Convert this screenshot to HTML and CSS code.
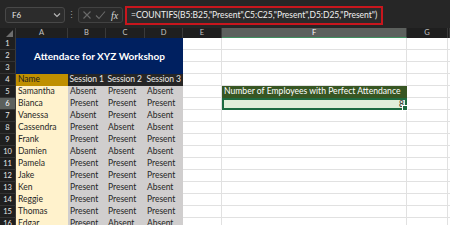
FILE: index.html
```html
<!DOCTYPE html>
<html>
<head>
<meta charset="utf-8">
<link rel="stylesheet" href="styles.css">
</head>
<body>
<div class="app">
  <div class="toolbar">
    <div class="namebox">
      <span class="ref">F6</span>
      <svg class="chev" width="8" height="6" viewBox="0 0 8 6"><path d="M1 1.5 L4 4.5 L7 1.5" fill="none" stroke="#b8b8b8" stroke-width="1.1"/></svg>
    </div>
    <div class="dots">⋮</div>
    <div class="btns">
      <svg width="10" height="10" viewBox="0 0 10 10"><path d="M1.5 1.5 L8.5 8.5 M8.5 1.5 L1.5 8.5" stroke="#6a6a6a" stroke-width="1.1" fill="none"/></svg>
      <svg width="11" height="10" viewBox="0 0 11 10"><path d="M1 5.5 L4 8.5 L10 1.5" stroke="#6a6a6a" stroke-width="1.1" fill="none"/></svg>
      <span class="fx">fx</span>
    </div>
    <div class="formula">=COUNTIFS(B5:B25,"Present",C5:C25,"Present",D5:D25,"Present")</div>
    <div class="rest"></div>
  </div>
  <div class="sheet">
    <div class="corner"><svg width="7" height="7" viewBox="0 0 7 7"><path d="M7 0 L7 7 L0 7 Z" fill="#6e6e6e"/></svg></div>
    <div class="ch">A</div><div class="ch">B</div><div class="ch">C</div><div class="ch">D</div><div class="ch">E</div><div class="ch sel">F</div><div class="ch">G</div><div class="ch"></div>

    <div class="rh">1</div><div class="title">Attendace for XYZ Workshop</div><div class="c"></div><div class="c"></div><div class="c"></div><div class="c"></div>
    <div class="rh">2</div><div class="c"></div><div class="c"></div><div class="c"></div><div class="c"></div>
    <div class="rh">3</div><div class="c"></div><div class="c"></div><div class="c"></div><div class="c"></div>

    <div class="rh">4</div><div class="c nmh">Name</div><div class="c sesh">Session 1</div><div class="c sesh">Session 2</div><div class="c sesh">Session 3</div><div class="c"></div><div class="c"></div><div class="c"></div><div class="c"></div>

    <div class="rh">5</div><div class="c nm">Samantha</div><div class="c v">Absent</div><div class="c v">Present</div><div class="c v">Absent</div><div class="c"></div><div class="c gh">Number of Employees with Perfect Attendance</div><div class="c"></div><div class="c"></div>
    <div class="rh sel">6</div><div class="c nm">Bianca</div><div class="c v">Present</div><div class="c v">Present</div><div class="c v">Present</div><div class="c"></div><div class="c result">8</div><div class="c"></div><div class="c"></div>
    <div class="rh">7</div><div class="c nm">Vanessa</div><div class="c v">Absent</div><div class="c v">Present</div><div class="c v">Absent</div><div class="c"></div><div class="c"></div><div class="c"></div><div class="c"></div>
    <div class="rh">8</div><div class="c nm">Cassendra</div><div class="c v">Present</div><div class="c v">Absent</div><div class="c v">Absent</div><div class="c"></div><div class="c"></div><div class="c"></div><div class="c"></div>
    <div class="rh">9</div><div class="c nm">Frank</div><div class="c v">Present</div><div class="c v">Present</div><div class="c v">Present</div><div class="c"></div><div class="c"></div><div class="c"></div><div class="c"></div>
    <div class="rh">10</div><div class="c nm">Damien</div><div class="c v">Absent</div><div class="c v">Absent</div><div class="c v">Absent</div><div class="c"></div><div class="c"></div><div class="c"></div><div class="c"></div>
    <div class="rh">11</div><div class="c nm">Pamela</div><div class="c v">Present</div><div class="c v">Present</div><div class="c v">Present</div><div class="c"></div><div class="c"></div><div class="c"></div><div class="c"></div>
    <div class="rh">12</div><div class="c nm">Jake</div><div class="c v">Present</div><div class="c v">Present</div><div class="c v">Present</div><div class="c"></div><div class="c"></div><div class="c"></div><div class="c"></div>
    <div class="rh">13</div><div class="c nm">Ken</div><div class="c v">Present</div><div class="c v">Present</div><div class="c v">Absent</div><div class="c"></div><div class="c"></div><div class="c"></div><div class="c"></div>
    <div class="rh">14</div><div class="c nm">Reggie</div><div class="c v">Present</div><div class="c v">Present</div><div class="c v">Present</div><div class="c"></div><div class="c"></div><div class="c"></div><div class="c"></div>
    <div class="rh">15</div><div class="c nm">Thomas</div><div class="c v">Present</div><div class="c v">Present</div><div class="c v">Present</div><div class="c"></div><div class="c"></div><div class="c"></div><div class="c"></div>
    <div class="rh">16</div><div class="c nm">Edgar</div><div class="c v">Present</div><div class="c v">Absent</div><div class="c v">Absent</div><div class="c"></div><div class="c"></div><div class="c"></div><div class="c"></div>
  </div>
</div>
</body>
</html>
```

FILE: styles.css
```css
* { box-sizing: border-box; }
html, body { margin: 0; padding: 0; }
body {
  width: 450px;
  height: 225px;
  overflow: hidden;
  background: #ffffff;
  font-family: "Lato", "Liberation Sans", sans-serif;
}
.app { display: flex; flex-direction: column; width: 450px; height: 225px; overflow: hidden; }

.toolbar {
  height: 28px;
  flex: none;
  background: #262626;
  display: flex;
  align-items: flex-start;
  padding: 7px 0 0 5px;
}
.namebox {
  width: 60px;
  height: 16px;
  border: 1px solid #484848;
  border-radius: 3px;
  background: #2c2c2c;
  display: flex;
  align-items: center;
  justify-content: space-between;
  padding: 0 3px 0 6px;
  color: #e6e6e6;
  font-size: 8px;
}
.chev { display: block; }
.dots {
  width: 13px;
  height: 16px;
  color: #9a9a9a;
  font-size: 9px;
  line-height: 16px;
  text-align: center;
}
.btns {
  width: 45px;
  height: 16px;
  border: 1px solid #424242;
  border-radius: 3px;
  background: #2a2a2a;
  display: flex;
  align-items: center;
  gap: 3px;
  padding: 0 0 0 3px;
}
.btns svg { display: block; }
.fx {
  font-family: "Liberation Serif", serif;
  font-style: italic;
  color: #d8d8d8;
  font-size: 10px;
  margin-left: 2px;
}
.formula {
  margin-left: 2px;
  margin-top: -1px;
  width: 258px;
  height: 19px;
  border: 2px solid #c8161d;
  background: #2b2b2b;
  color: #f0f0f0;
  font-size: 8.5px;
  line-height: 15px;
  padding: 0 0 0 4px;
  white-space: nowrap;
  overflow: hidden;
}
.rest { flex: 1; }

.sheet {
  display: grid;
  grid-template-columns: 16px 52px 38px 39px 38px 39px 185px 41px 2px;
  grid-template-rows: 10px;
  grid-auto-rows: 12px;
  font-size: 8.5px;
}
.corner {
  background: #1f1f1f;
  border-right: 1px solid #3a3a3a;
  display: flex;
  align-items: flex-end;
  justify-content: flex-end;
  padding: 0 2px 1px 0;
}
.corner svg { display: block; }
.ch {
  background: #1f1f1f;
  color: #c4c4c4;
  border-right: 1px solid #3a3a3a;
  font-size: 7.5px;
  line-height: 10px;
  text-align: center;
}
.ch.sel { background: #5c605d; color: #ffffff; border-bottom: 1px solid #3f8f5f; line-height: 9px; }
.rh {
  background: #1f1f1f;
  color: #e8e8e8;
  border-bottom: 1px solid #333333;
  border-right: 1px solid #3a3a3a;
  font-size: 7.5px;
  line-height: 11px;
  text-align: center;
}
.rh.sel { background: #5c605d; color: #ffffff; }

.c {
  border-right: 1px solid #e1e1e1;
  border-bottom: 1px solid #e1e1e1;
  padding: 0 2px;
  line-height: 11px;
  white-space: nowrap;
  overflow: hidden;
  color: #262626;
}
.title {
  grid-column: span 4;
  grid-row: span 3;
  background: #002060;
  color: #ffffff;
  font-weight: 700;
  font-size: 10px;
  display: flex;
  align-items: center;
  justify-content: center;
}
.nmh { background: #bf8f00; border-color: #bf8f00; color: #1e1e1e; }
.sesh { background: #262626; border-color: #262626; color: #e8e8e8; padding: 0 1px 0 1.5px; letter-spacing: -0.1px; }
.nm { background: #fff2cc; border-color: #fff2cc; }
.v { background: #d0cece; border-color: #d0cece; }
.gh { background: #375623; border-color: #375623; color: #ffffff; font-size: 8.6px; }
.result {
  position: relative;
  overflow: visible;
  background: #e2efda;
  border: 2px solid #1e6b41;
  text-align: right;
  line-height: 8px;
  padding: 0 1px;
}
.result::after {
  content: "";
  position: absolute;
  right: -3px;
  bottom: -3px;
  width: 4px;
  height: 4px;
  background: #1e6b41;
  border: 1px solid #ffffff;
}
```
